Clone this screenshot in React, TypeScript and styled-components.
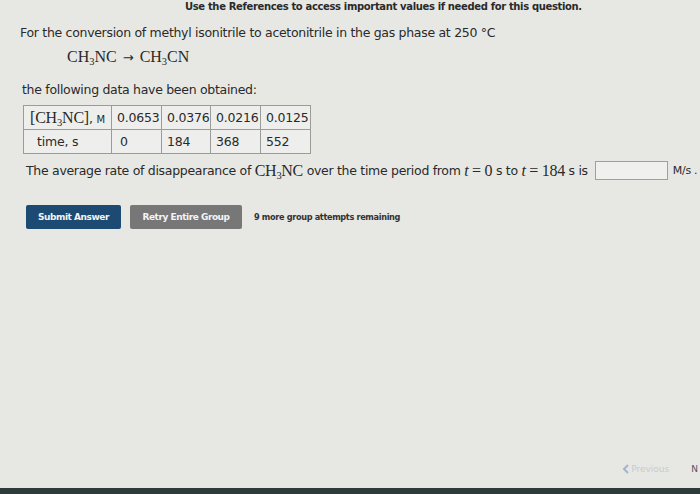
import React, { FC } from "react";
import styled, { createGlobalStyle } from "styled-components";

const Global = createGlobalStyle`
  html, body {
    margin: 0;
    padding: 0;
    background: #e7e8e4;
  }
  body {
    font-family: "DejaVu Sans", Verdana, sans-serif;
    color: #2a2a2a;
  }
`;

const Page = styled.div`
  width: 700px;
  height: 494px;
  display: flex;
  flex-direction: column;
  background: #e7e8e4;
  overflow: hidden;
`;

const Body = styled.div`
  flex: 1;
  display: flex;
  flex-direction: column;
  align-items: flex-start;
`;

const Notice = styled.div`
  font-size: 10px;
  font-weight: bold;
  letter-spacing: -0.35px;
  padding: 1px 0 0 185px;
  height: 14px;
`;

const Text = styled.p<{ $indent?: number; $top?: number }>`
  margin: ${(p) => p.$top ?? 0}px 0 0 ${(p) => p.$indent ?? 0}px;
  font-size: 12.5px;
  letter-spacing: -0.3px;
  line-height: 16px;
`;

const Eq = styled.div`
  margin: 7px 0 0 67px;
  font-family: "Liberation Serif", "Times New Roman", serif;
  font-size: 16px;
  line-height: 18px;
`;

const Arrow = styled.span`
  font-family: "DejaVu Sans", sans-serif;
  font-size: 13px;
  margin: 0 6px;
`;

const Sub = styled.sub`
  font-size: 10.5px;
  vertical-align: -3px;
  line-height: 0;
`;

const Serif = styled.span`
  font-family: "Liberation Serif", "Times New Roman", serif;
  font-size: 16px;
`;

const Ital = styled.i`
  font-family: "Liberation Serif", "Times New Roman", serif;
  font-size: 16px;
`;

const Table = styled.table`
  margin: 7px 0 0 23px;
  border-collapse: collapse;
  table-layout: fixed;
  font-size: 12.5px;
  letter-spacing: -0.2px;
  background: #eeefec;
`;

const Cell = styled.td<{ $w: number; $pad?: number }>`
  border: 1px solid #9a9c98;
  width: ${(p) => p.$w}px;
  height: 24px;
  padding: 0 0 0 ${(p) => p.$pad ?? 5}px;
  box-sizing: border-box;
  white-space: nowrap;
`;

const Unit = styled.span<{ $size?: number }>`
  font-size: ${(p) => p.$size ?? 10}px;
`;

const Line = styled.div`
  margin: 7px 0 0 26px;
  display: flex;
  align-items: center;
  font-size: 12.5px;
  letter-spacing: -0.3px;
  white-space: nowrap;
`;

const Answer = styled.div`
  width: 71px;
  height: 17px;
  margin: 0 5px 0 7px;
  border: 1px solid #9ea09c;
  background: #f0f1ee;
`;

const Actions = styled.div`
  margin: 25px 0 0 26px;
  display: flex;
  align-items: center;
  gap: 9px;
`;

const Button = styled.div<{ $bg: string; $w: number }>`
  width: ${(p) => p.$w}px;
  height: 24px;
  display: flex;
  align-items: center;
  justify-content: center;
  background: ${(p) => p.$bg};
  color: #f2f4f6;
  font-size: 9px;
  font-weight: bold;
  letter-spacing: -0.45px;
  border-radius: 2px;
`;

const Attempts = styled.span`
  margin-left: 3px;
  font-size: 8.2px;
  font-weight: bold;
  letter-spacing: -0.35px;
  color: #333;
`;

const Footer = styled.div`
  display: flex;
  justify-content: flex-end;
  align-items: center;
  gap: 22px;
  padding: 0 2px 14px 0;
  font-size: 9px;
  color: #c7cac8;
`;

const Prev = styled.span`
  display: flex;
  align-items: center;
  gap: 2px;
  color: #c6cbd0;
`;

const Next = styled.span`
  color: #556;
`;

const Edge = styled.div`
  height: 6px;
  background: #2f3b3b;
`;

const rows = [
  ["0.0653", "0.0376", "0.0216", "0.0125"],
  ["0", "184", "368", "552"],
];
const widths = [50, 49, 50, 50];

const App: FC = () => {
  return (
    <Page>
      <Global />
      <Body>
        <Notice>Use the References to access important values if needed for this question.</Notice>
        <Text $indent={20} $top={10}>
          For the conversion of methyl isonitrile to acetonitrile in the gas phase at 250 °C
        </Text>
        <Eq>
          CH<Sub>3</Sub>NC<Arrow>→</Arrow>CH<Sub>3</Sub>CN
        </Eq>
        <Text $indent={22} $top={15}>the following data have been obtained:</Text>
        <Table>
          <tbody>
            <tr>
              <Cell $w={88} $pad={6}>
                <Serif>
                  [CH<Sub>3</Sub>NC]
                </Serif>
                , <Unit>M</Unit>
              </Cell>
              {rows[0].map((v, i) => (
                <Cell key={i} $w={widths[i]}>{v}</Cell>
              ))}
            </tr>
            <tr>
              <Cell $w={88} $pad={13}>time, s</Cell>
              {rows[1].map((v, i) => (
                <Cell key={i} $w={widths[i]} $pad={i === 0 ? 8 : 5}>{v}</Cell>
              ))}
            </tr>
          </tbody>
        </Table>
        <Line>
          The average rate of disappearance of&nbsp;
          <Serif>
            CH<Sub>3</Sub>NC
          </Serif>
          &nbsp;over the time period from&nbsp;<Ital>t</Ital>
          <Serif>&nbsp;= 0&nbsp;</Serif>s to&nbsp;<Ital>t</Ital>
          <Serif>&nbsp;= 184&nbsp;</Serif>s is
          <Answer />
          <Unit $size={11}>M/s .</Unit>
        </Line>
        <Actions>
          <Button $bg="#1d4a72" $w={95}>Submit Answer</Button>
          <Button $bg="#767776" $w={112}>Retry Entire Group</Button>
          <Attempts>9 more group attempts remaining</Attempts>
        </Actions>
      </Body>
      <Footer>
        <Prev>
          <svg width="7" height="10" viewBox="0 0 7 10">
            <path d="M6 1 L2 5 L6 9" fill="none" stroke="#9fb6cc" strokeWidth="2" />
          </svg>
          Previous
        </Prev>
        <Next>N</Next>
      </Footer>
      <Edge />
    </Page>
  );
};

export default App;
